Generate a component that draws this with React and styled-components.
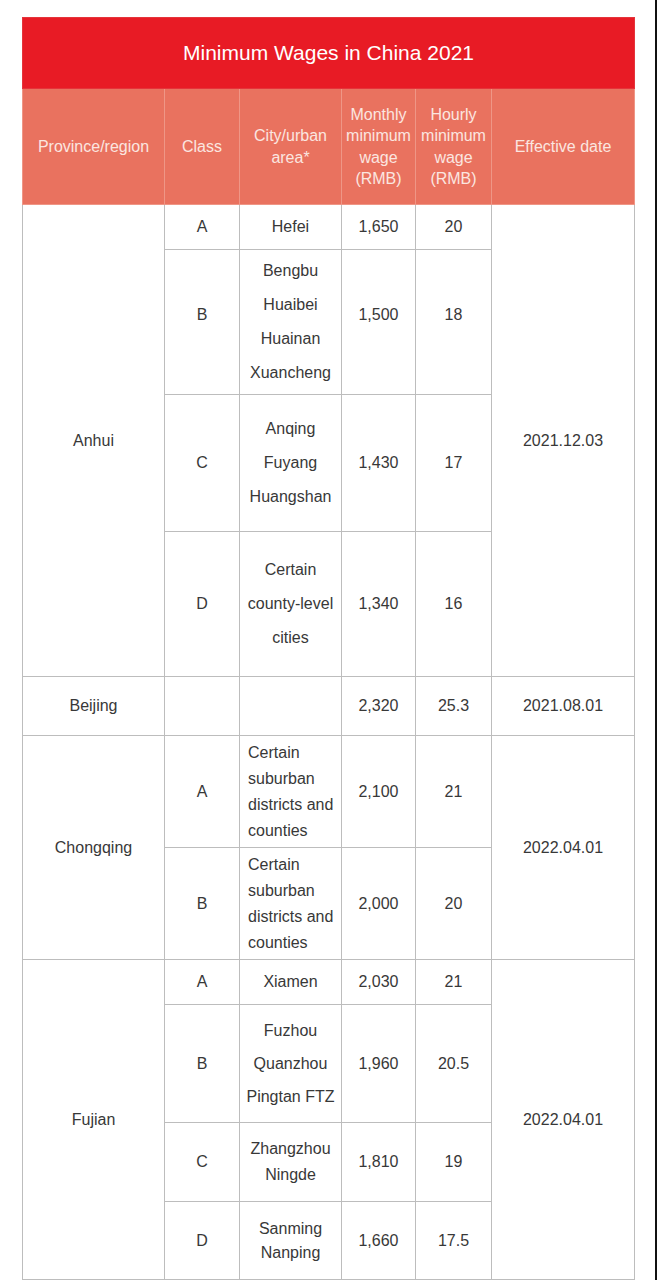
import React from 'react'
import styled, { createGlobalStyle } from 'styled-components'

const GlobalStyle = createGlobalStyle`
  * {
    box-sizing: border-box;
  }
  body {
    margin: 0;
    background: #ffffff;
    font-family: "Liberation Sans", Arial, sans-serif;
  }
`

const groups = [
  {
    province: 'Anhui',
    date: '2021.12.03',
    rows: [
      { cls: 'A', city: ['Hefei'], monthly: '1,650', hourly: '20', h: 45 },
      { cls: 'B', city: ['Bengbu', 'Huaibei', 'Huainan', 'Xuancheng'], monthly: '1,500', hourly: '18', h: 145, lh: 34, pb: 14 },
      { cls: 'C', city: ['Anqing', 'Fuyang', 'Huangshan'], monthly: '1,430', hourly: '17', h: 137, lh: 34 },
      { cls: 'D', city: ['Certain', 'county-level', 'cities'], monthly: '1,340', hourly: '16', h: 145, lh: 34 },
    ],
  },
  {
    province: 'Beijing',
    date: '2021.08.01',
    rows: [{ cls: '', city: [], monthly: '2,320', hourly: '25.3', h: 59 }],
  },
  {
    province: 'Chongqing',
    date: '2022.04.01',
    rows: [
      { cls: 'A', city: ['Certain', 'suburban', 'districts and', 'counties'], monthly: '2,100', hourly: '21', h: 112, lh: 26, left: true },
      { cls: 'B', city: ['Certain', 'suburban', 'districts and', 'counties'], monthly: '2,000', hourly: '20', h: 112, lh: 26, left: true },
    ],
  },
  {
    province: 'Fujian',
    date: '2022.04.01',
    rows: [
      { cls: 'A', city: ['Xiamen'], monthly: '2,030', hourly: '21', h: 45 },
      { cls: 'B', city: ['Fuzhou', 'Quanzhou', 'Pingtan FTZ'], monthly: '1,960', hourly: '20.5', h: 118, lh: 33 },
      { cls: 'C', city: ['Zhangzhou', 'Ningde'], monthly: '1,810', hourly: '19', h: 79, lh: 26 },
      { cls: 'D', city: ['Sanming', 'Nanping'], monthly: '1,660', hourly: '17.5', h: 78, lh: 24 },
    ],
  },
]

const headers = [
  ['Province/region'],
  ['Class'],
  ['City/urban', 'area*'],
  ['Monthly', 'minimum', 'wage', '(RMB)'],
  ['Hourly', 'minimum', 'wage', '(RMB)'],
  ['Effective date'],
]

const colWidths = [142, 75, 102, 74, 76, 143]

const App = () => {
  return (
    <Page>
      <GlobalStyle />
      <Table>
        <colgroup>
          {colWidths.map((w, i) => (
            <col key={i} style={{ width: w }} />
          ))}
        </colgroup>
        <thead>
          <TitleRow>
            <TitleCell colSpan={6}>Minimum Wages in China 2021</TitleCell>
          </TitleRow>
          <HeadRow>
            {headers.map((lines, i) => (
              <HeadCell key={i}>
                {lines.map((l) => (
                  <Line key={l}>{l}</Line>
                ))}
              </HeadCell>
            ))}
          </HeadRow>
        </thead>
        <tbody>
          {groups.map((g) =>
            g.rows.map((r, i) => (
              <Row key={g.province + i} $h={r.h}>
                {i === 0 && <Cell rowSpan={g.rows.length}>{g.province}</Cell>}
                <Cell $pb={r.pb}>{r.cls}</Cell>
                <Cell $lh={r.lh} $left={r.left}>
                  {r.city.map((c, j) => (
                    <Line key={j}>{c}</Line>
                  ))}
                </Cell>
                <Cell $pb={r.pb}>{r.monthly}</Cell>
                <Cell $pb={r.pb}>{r.hourly}</Cell>
                {i === 0 && <Cell rowSpan={g.rows.length}>{g.date}</Cell>}
              </Row>
            ))
          )}
        </tbody>
      </Table>
    </Page>
  )
}

export default App

const Page = styled.div`
  width: 657px;
  min-height: 1280px;
  padding: 17px 0 0 22px;
  border-right: 2px solid #111111;
`

const Table = styled.table`
  width: 612px;
  table-layout: fixed;
  border-collapse: collapse;
  font-size: 16px;
  color: #383838;
`

const TitleRow = styled.tr`
  height: 71px;
`

const TitleCell = styled.th`
  background: #e81b25;
  color: #ffffff;
  font-size: 21px;
  font-weight: normal;
  text-align: center;
  vertical-align: middle;
  padding: 0;
  border: 1px solid #e5343b;
`

const HeadRow = styled.tr`
  height: 116px;
`

const HeadCell = styled.th`
  background: #e9725f;
  color: #fbe6e0;
  font-weight: normal;
  font-size: 16px;
  line-height: 21.5px;
  text-align: center;
  vertical-align: middle;
  padding: 0 2px;
  border: 1px solid #ef9686;
  border-top: none;
`

const Row = styled.tr`
  height: ${(p) => p.$h}px;
`

const Cell = styled.td`
  border: 1px solid #bdbdbd;
  text-align: ${(p) => (p.$left ? 'left' : 'center')};
  vertical-align: middle;
  line-height: ${(p) => p.$lh || 20}px;
  padding: 0 ${(p) => (p.$left ? '4px 0 8px' : '2px')};
  padding-bottom: ${(p) => p.$pb || 0}px;
  white-space: nowrap;
`

const Line = styled.div`
  display: block;
`
